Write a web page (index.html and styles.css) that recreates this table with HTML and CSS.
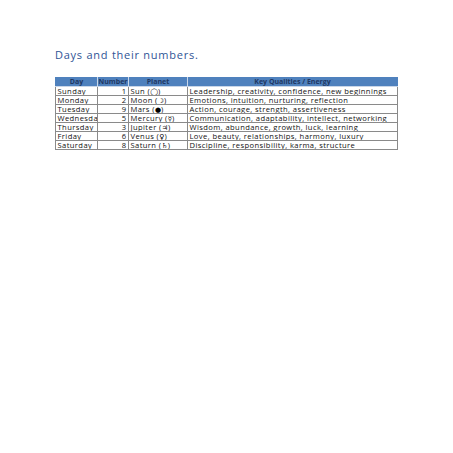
FILE: index.html
```html
<!DOCTYPE html>
<html>
<head>
<meta charset="utf-8">
<link rel="stylesheet" href="styles.css">
</head>
<body>
<div class="page">
  <h1 class="title">Days and their numbers.</h1>
  <table class="grid">
    <colgroup>
      <col class="c-day"><col class="c-num"><col class="c-planet"><col class="c-key">
    </colgroup>
    <thead>
      <tr><th>Day</th><th>Number</th><th>Planet</th><th>Key Qualities / Energy</th></tr>
    </thead>
    <tbody>
      <tr><td>Sunday</td><td class="num">1</td><td>Sun (<span class="sym">◯</span>)</td><td>Leadership, creativity, confidence, new beginnings</td></tr>
      <tr><td>Monday</td><td class="num">2</td><td>Moon (<span class="sym">☽</span>)</td><td>Emotions, intuition, nurturing, reflection</td></tr>
      <tr><td>Tuesday</td><td class="num">9</td><td>Mars (<span class="sym">●</span>)</td><td>Action, courage, strength, assertiveness</td></tr>
      <tr><td>Wednesda</td><td class="num">5</td><td>Mercury (<span class="sym">☿</span>)</td><td>Communication, adaptability, intellect, networking</td></tr>
      <tr><td>Thursday</td><td class="num">3</td><td>Jupiter (<span class="sym">♃</span>)</td><td>Wisdom, abundance, growth, luck, learning</td></tr>
      <tr><td>Friday</td><td class="num">6</td><td>Venus (<span class="sym">♀</span>)</td><td>Love, beauty, relationships, harmony, luxury</td></tr>
      <tr><td>Saturday</td><td class="num">8</td><td>Saturn (<span class="sym">♄</span>)</td><td>Discipline, responsibility, karma, structure</td></tr>
    </tbody>
  </table>
</div>
</body>
</html>
```
FILE: styles.css
```css
html, body {
  margin: 0;
  padding: 0;
  background: #ffffff;
}
.page {
  padding: 48px 0 0 55px;
}
.title {
  margin: 0 0 15px 0;
  font-family: "Open Sans", "Liberation Sans", sans-serif;
  font-weight: 400;
  font-size: 11px;
  line-height: 14px;
  color: #2f5496;
  letter-spacing: 0.75px;
}
.grid {
  border-collapse: collapse;
  table-layout: fixed;
  width: 342px;
  font-family: "Open Sans", "Liberation Sans", "DejaVu Sans", sans-serif;
  font-size: 7.6px;
  letter-spacing: 0.4px;
  color: #111;
}
.c-day { width: 42px; }
.c-num { width: 31px; }
.c-planet { width: 59px; }
.c-key { width: 210px; }
.grid tr { height: 9px; }
.grid th, .grid td {
  height: 8px;
  line-height: 8px;
  padding: 0 1.5px;
  white-space: nowrap;
  overflow: hidden;
  vertical-align: middle;
  border: 1px solid #8a8a8a;
}
.grid th {
  background: #4f81bd;
  color: #1f3864;
  font-weight: 700;
  font-size: 7px;
  text-align: center;
  letter-spacing: 0;
  padding: 0;
  border-color: #c9d6e8;
  border-top-color: #4f81bd;
}
.grid th:first-child { border-left-color: #4f81bd; }
.grid th:last-child { border-right-color: #4f81bd; }
.grid td.num { text-align: right; }
.sym {
  font-family: "DejaVu Sans", sans-serif;
  font-size: 7px;
  line-height: 0;
  letter-spacing: 0;
  color: #000;
}
```
